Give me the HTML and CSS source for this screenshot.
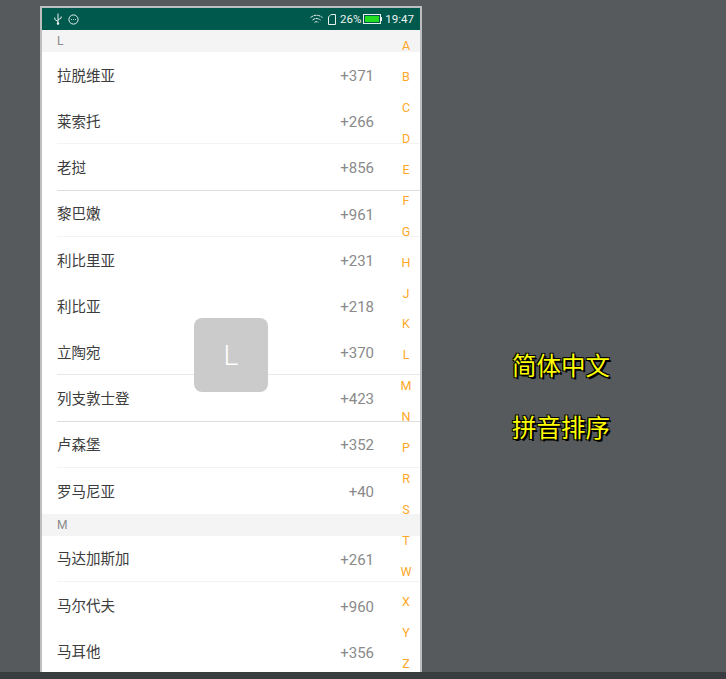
FILE: index.html
```html
<!DOCTYPE html>
<html lang="zh">
<head>
<meta charset="utf-8">
<title>国家列表</title>
<link rel="stylesheet" href="styles.css">
</head>
<body>
<div class="stage">
  <div class="phone">
    <div class="status">
      <svg class="ic-usb" width="10" height="12" viewBox="0 0 10 12"><path d="M5 0.5V11.5M5 8.5L1.8 6.5V4.5M5 7L8.2 5V3.5" fill="none" stroke="#e8f0ee" stroke-width="1"/><circle cx="5" cy="10.5" r="1.2" fill="#e8f0ee"/></svg>
      <svg class="ic-dots" width="11" height="11" viewBox="0 0 11 11"><circle cx="5.5" cy="5.5" r="4.6" fill="none" stroke="#e8f0ee" stroke-width="1"/><path d="M3 5.5h1M5 5.5h1M7 5.5h1" stroke="#e8f0ee" stroke-width="0.8"/></svg>
      <span class="spacer"></span>
      <svg class="ic-wifi" width="13" height="10" viewBox="0 0 13 10"><path d="M0.5 3.5Q6.5 -1 12.5 3.5M2.5 6Q6.5 3 10.5 6M4.5 8.3Q6.5 7 8.5 8.3" fill="none" stroke="#e8f0ee" stroke-width="1" stroke-dasharray="3 0.6"/></svg>
      <svg class="ic-sim" width="8" height="11" viewBox="0 0 8 11"><path d="M3 0.5H7.5V10.5H0.5V3Z" fill="none" stroke="#e8f0ee" stroke-width="1"/></svg>
      <span class="pct">26%</span>
      <span class="battery"><span class="battery-fill"></span></span>
      <span class="time">19:47</span>
    </div>
    <div class="section">L</div>
    <div class="row"><span class="name">拉脱维亚</span><span class="code">+371</span></div>
    <div class="row line-faint"><span class="name">莱索托</span><span class="code">+266</span></div>
    <div class="row line-strong"><span class="name">老挝</span><span class="code">+856</span></div>
    <div class="row line-faint"><span class="name">黎巴嫩</span><span class="code">+961</span></div>
    <div class="row"><span class="name">利比里亚</span><span class="code">+231</span></div>
    <div class="row"><span class="name">利比亚</span><span class="code">+218</span></div>
    <div class="row line-mid"><span class="name">立陶宛</span><span class="code">+370</span></div>
    <div class="row line-strong"><span class="name">列支敦士登</span><span class="code">+423</span></div>
    <div class="row line-faint"><span class="name">卢森堡</span><span class="code">+352</span></div>
    <div class="row"><span class="name">罗马尼亚</span><span class="code">+40</span></div>
    <div class="section">M</div>
    <div class="row line-faint"><span class="name">马达加斯加</span><span class="code">+261</span></div>
    <div class="row"><span class="name">马尔代夫</span><span class="code">+960</span></div>
    <div class="row"><span class="name">马耳他</span><span class="code">+356</span></div>
    <div class="index">
      <span>A</span><span>B</span><span>C</span><span>D</span><span>E</span><span>F</span><span>G</span><span>H</span><span>J</span><span>K</span><span>L</span><span>M</span><span>N</span><span>P</span><span>R</span><span>S</span><span>T</span><span>W</span><span>X</span><span>Y</span><span>Z</span>
    </div>
    <div class="toast">L</div>
  </div>
  <div class="caption">
    <div>简体中文</div>
    <div>拼音排序</div>
  </div>
</div>
<div class="taskbar"></div>
</body>
</html>
```
FILE: styles.css
```css
* { box-sizing: border-box; }
html, body { margin: 0; height: 100%; overflow: hidden; }
body {
  background: #565a5d;
  font-family: "Roboto", "Noto Sans CJK SC", sans-serif;
  display: flex;
  flex-direction: column;
  height: 679px;
}
.stage { flex: 1; min-height: 0; display: flex; padding: 6px 0 0 40px; overflow: hidden; }
.phone {
  position: relative;
  width: 382px;
  flex: none;
  height: 667px;
  background: #fff;
  border: 2px solid #bcbebf;
  border-bottom: none;
  overflow: hidden;
}
.status {
  height: 22px;
  background: #00594d;
  color: #eef4f2;
  display: flex;
  align-items: center;
  padding: 0 6px 0 11px;
  font-size: 11px;
}
.ic-dots { margin-left: 5px; }
.spacer { flex: 1; }
.ic-sim { margin-left: 5px; }
.pct { margin-left: 4px; font-size: 11.5px; }
.battery {
  position: relative;
  margin-left: 2px;
  width: 18px;
  height: 10px;
  border: 1px solid #e8f0ee;
  padding: 1px;
  display: flex;
}
.battery::after {
  content: "";
  position: absolute;
  right: -2px;
  top: 2px;
  width: 1px;
  height: 4px;
  background: #e8f0ee;
}
.battery-fill { flex: 1; background: #22dd22; }
.time { margin-left: 4px; font-size: 11.5px; }
.section {
  height: 22px;
  background: #f4f4f4;
  color: #8a8a8a;
  font-size: 12px;
  padding-left: 15px;
  line-height: 23px;
}
.row {
  height: 46.2px;
  margin-left: 15px;
  padding-right: 46px;
  display: flex;
  justify-content: space-between;
  align-items: center;
  font-size: 14.5px;
  color: #3d3d3d;
}
.name { position: relative; top: -0.65px; }
.code { color: #8a8a8a; font-size: 15px; position: relative; top: 1.35px; }
.line-faint { border-bottom: 1px solid #f3f3f3; }
.line-mid { border-bottom: 1px solid #e8e8e8; }
.line-strong { border-bottom: 1px solid #dedede; }
.index {
  position: absolute;
  top: 23.4px;
  right: 0;
  width: 28px;
  display: flex;
  flex-direction: column;
  color: #ffa726;
  font-size: 12.5px;
  text-align: center;
}
.index span { height: 30.9px; line-height: 30.9px; }
.toast {
  position: absolute;
  left: 152px;
  top: 310px;
  width: 74px;
  height: 74px;
  border-radius: 8px;
  background: #cbcbcb;
  color: #fff;
  font-size: 28px;
  font-weight: 300;
  display: flex;
  align-items: center;
  justify-content: center;
}
.caption {
  margin: 345px 0 0 90px;
  color: #ffff00;
  font-size: 24.5px;
  line-height: 32px;
  display: flex;
  flex-direction: column;
  gap: 30px;
  text-shadow: -1px -1px 0 #000, 1px -1px 0 #000, -1px 1px 0 #000, 1px 1px 0 #000, 2px 2px 0 #000;
}
.taskbar { height: 7px; flex: none; background: #3a3d40; }
```
